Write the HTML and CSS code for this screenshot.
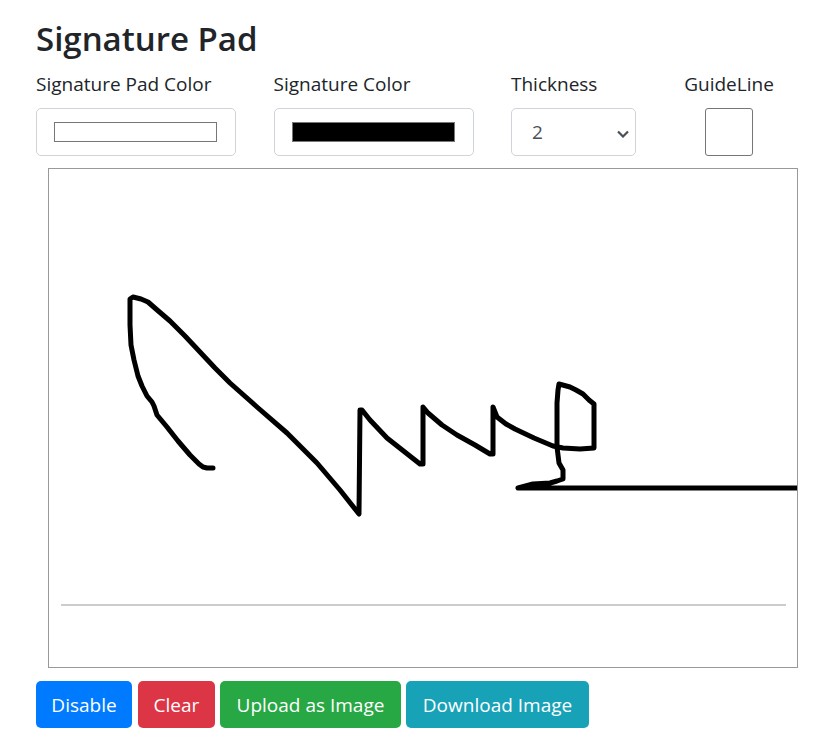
FILE: index.html
```html
<!DOCTYPE html>
<html lang="en">
<head>
  <meta charset="UTF-8">
  <title>Signature Pad</title>
  <link rel="stylesheet" href="styles.css">
</head>
<body>
  <div class="container">
    <h1>Signature Pad</h1>

    <!-- Options -->
    <div class="options">
      <div class="option option-pad">
        <label>Signature Pad Color</label>
        <input type="color" class="color-input" value="#ffffff">
      </div>
      <div class="option option-pen">
        <label>Signature Color</label>
        <input type="color" class="color-input" value="#000000">
      </div>
      <div class="option option-thickness">
        <label>Thickness</label>
        <select class="thickness-select">
          <option>1</option>
          <option selected>2</option>
          <option>3</option>
        </select>
      </div>
      <div class="option option-guide">
        <label>GuideLine</label>
        <input type="checkbox" class="guide-check">
      </div>
    </div>

    <!-- Pad -->
    <div class="pad">
      <svg class="pad-drawing" width="748" height="498" viewBox="49 169 748 498">
        <line class="guide-line" x1="61" y1="605" x2="786" y2="605"></line>
        <polyline class="ink" points="213,468 207,468 203,467 199,464 190,455 178,441 167,427 157,415 154,406 152,402 147,396 142,386 138,376 134,360 131,345 130,325 130,303 130,299 133,297 141,299 148,302 156,309 170,321 185,336 200,352 215,368 230,383 257,407 287,433 303,449 317,463 340,490 359,514 360,410 362,410 370,420 387,438 420,464 423,464 423,407 428,413 442,425 457,435 475,445 490,454 493,454 493,407 497,417 506,424 515,429 534,438 553,446 563,448 580,449 594,448 594,404 589,400 583,394 576,390 570,387 559,384 558,390 557,403 557,447 559,463 563,470 563,479 557,481 550,483 533,484 518,488 630,488 797,488"></polyline>
      </svg>
    </div>

    <!-- Buttons -->
    <div class="actions">
      <button class="btn btn-blue">Disable</button>
      <button class="btn btn-red">Clear</button>
      <button class="btn btn-green">Upload as Image</button>
      <button class="btn btn-teal">Download Image</button>
    </div>
  </div>
</body>
</html>
```

FILE: styles.css
```css
body {
  margin: 0;
  padding: 0;
  background-color: white;
  color: #212529;
  font-family: "Open Sans", "Noto Sans", Arial, sans-serif;
}

.container {
  padding: 0 36px;
}

h1 {
  margin: 0;
  padding-top: 18px;
  height: 71px;
  box-sizing: border-box;
  line-height: 42px;
  font-size: 33px;
  font-weight: 600;
}

/* Options */
.options {
  display: flex;
  column-gap: 37.5px;
}

.option {
  display: flex;
  flex-direction: column;
  flex-shrink: 0;
}

.option label {
  height: 37px;
  line-height: 27px;
  font-size: 19px;
  white-space: nowrap;
}

.option-pad, .option-pen {
  width: 200px;
}

.option-thickness {
  width: 125px;
}

.option-guide {
  width: 88px;
  margin-left: 11.5px;
  align-items: center;
}

.color-input {
  box-sizing: border-box;
  width: 200px;
  height: 48px;
  margin: 0;
  padding: 13px 18px 13px 17px;
  background-color: white;
  border: 1px solid #ced4da;
  border-radius: 5px;
}

.color-input::-webkit-color-swatch-wrapper {
  padding: 0;
}

.thickness-select {
  box-sizing: border-box;
  width: 125px;
  height: 48px;
  padding: 0 12px 0 20px;
  appearance: none;
  background: white url("data:image/svg+xml,%3Csvg xmlns='http://www.w3.org/2000/svg' width='12' height='8'%3E%3Cpath d='M1 1.5l5 5 5-5' fill='none' stroke='%23495057' stroke-width='2.2'/%3E%3C/svg%3E") no-repeat right 6px top 21px;
  color: #495057;
  border: 1px solid #ced4da;
  border-radius: 5px;
  font-family: inherit;
  font-size: 19px;
}

.guide-check {
  box-sizing: border-box;
  width: 48px;
  height: 48px;
  margin: 0;
  appearance: none;
  background-color: white;
  border: 1px solid #767676;
  border-radius: 3px;
}

/* Pad */
.pad {
  width: 750px;
  height: 500px;
  box-sizing: border-box;
  margin: 12px 0 13px 12px;
  border: 1px solid #999;
}

.pad-drawing {
  display: block;
}

.guide-line {
  stroke: #ccc;
  stroke-width: 2;
}

.ink {
  fill: none;
  stroke: black;
  stroke-width: 5;
  stroke-linejoin: round;
  stroke-linecap: round;
}

/* Buttons */
.actions {
  display: flex;
  column-gap: 5px;
}

.btn {
  height: 47px;
  padding: 0;
  border: 1px solid transparent;
  border-radius: 5px;
  color: white;
  font-family: inherit;
  font-size: 19px;
  cursor: pointer;
}

.btn-blue {
  width: 96px;
  margin-right: 1px;
  background-color: #007bff;
}

.btn-red {
  width: 77px;
  background-color: #dc3545;
}

.btn-green {
  width: 181px;
  background-color: #28a745;
}

.btn-teal {
  width: 183px;
  background-color: #17a2b8;
}
```
